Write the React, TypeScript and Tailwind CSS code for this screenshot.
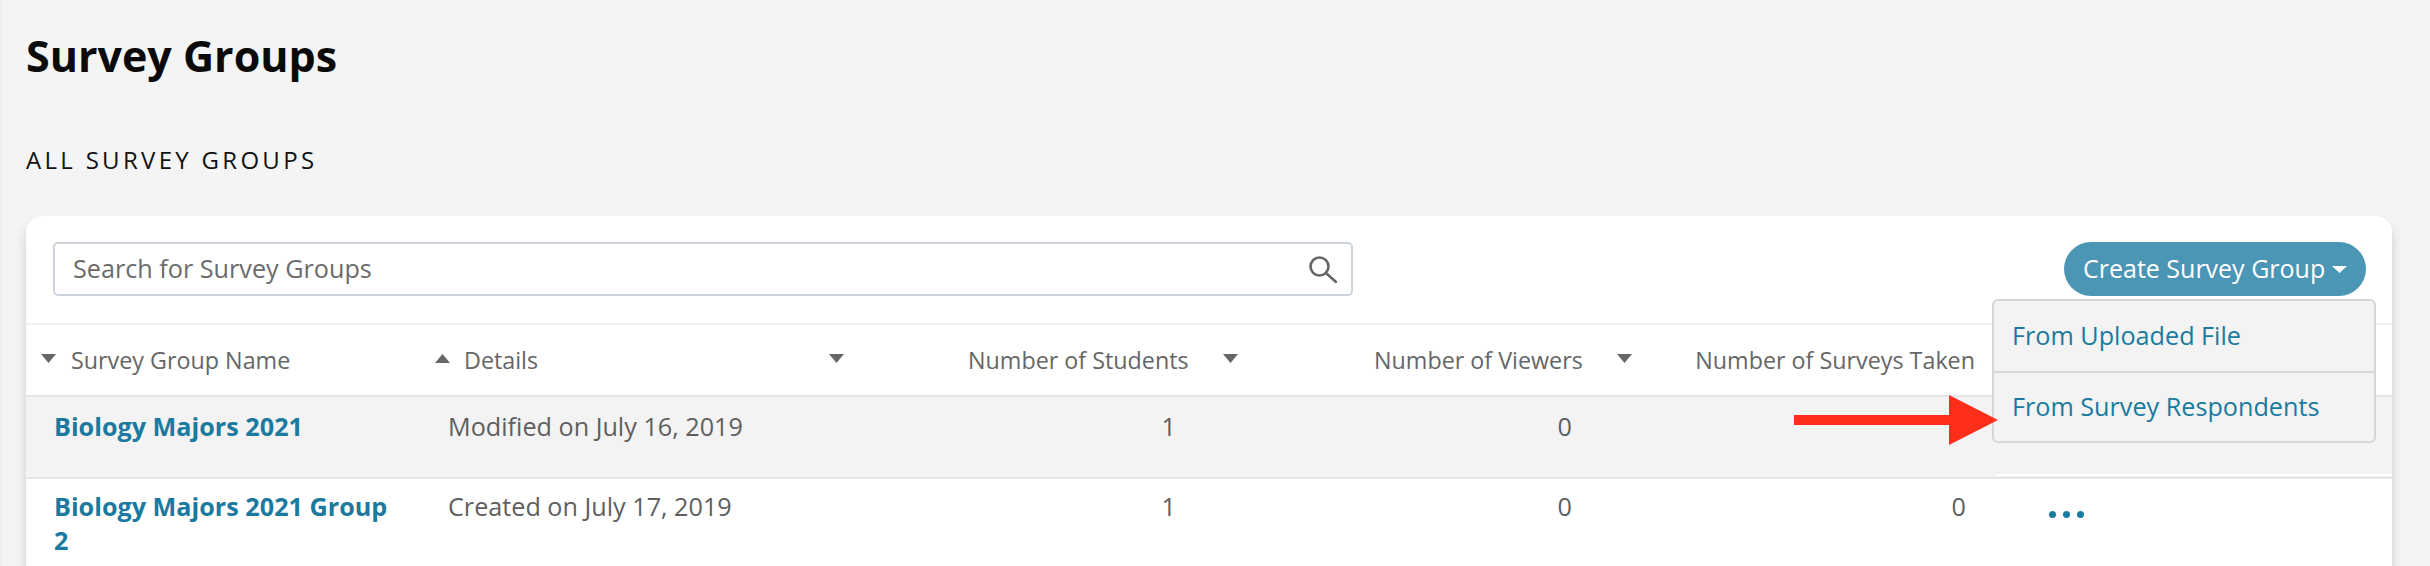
import React from 'react';

const fontStyle = "font-['Open_Sans',sans-serif]";

const SortDown = () => (
  <svg width="15" height="9" viewBox="0 0 15 9" className="mb-[4px] shrink-0">
    <path d="M0 0H15L7.5 9Z" fill="#666" />
  </svg>
);

const SortUp = () => (
  <svg width="15" height="9" viewBox="0 0 15 9" className="mb-[4px] shrink-0">
    <path d="M0 9H15L7.5 0Z" fill="#666" />
  </svg>
);

const Row: React.FC<{ name: React.ReactNode; details: string; students: string; viewers: string; taken?: string; grey?: boolean; menu?: boolean }> = ({
  name,
  details,
  students,
  viewers,
  taken,
  grey,
  menu,
}) => (
  <div className={`flex items-start border-t-2 border-[#e2e5e9] text-[25.2px] leading-[34px] text-[#5f5f5f] ${grey ? 'h-[82px] bg-[#f3f3f3] pt-[12px]' : 'bg-white pt-[10px]'}`}>
    <a href="#" className="ml-[28px] w-[394px] font-bold text-[#1b7a9e]">
      <span className="block w-[345px]">{name}</span>
    </a>
    <div className="w-[397px]">{details}</div>
    <div className="w-[331px] text-right">{students}</div>
    <div className="w-[396px] text-right">{viewers}</div>
    <div className="w-[394px] text-right">{taken}</div>
    {menu && (
      <div className="ml-[83px] mt-[22px] flex gap-[7px]">
        <span className="h-[7px] w-[7px] rounded-full bg-[#1b7a9e]" />
        <span className="h-[7px] w-[7px] rounded-full bg-[#1b7a9e]" />
        <span className="h-[7px] w-[7px] rounded-full bg-[#1b7a9e]" />
      </div>
    )}
  </div>
);

export default function App() {
  return (
    <div className={`h-[566px] overflow-hidden border-l-2 border-[#efefef] bg-[#f4f4f4] pl-[24px] pr-[38px] ${fontStyle}`}>
      <h1 className="pt-[27px] text-[43px] font-bold leading-[58px] text-[#0a0a0a]">Survey Groups</h1>
      <h2 className="mt-[60px] text-[24px] leading-[30px] tracking-[3.3px] text-[#111]">ALL SURVEY GROUPS</h2>
      <div className="relative mt-[41px] h-[400px] rounded-t-[16px] bg-white shadow-[0_8px_12px_rgba(0,0,0,0.16)]">
        {/* toolbar */}
        <div className="flex h-[109px] items-start justify-between border-b-2 border-[#f0f0f0] pl-[27px] pr-[26px] pt-[26px]">
          <div className="flex h-[54px] w-[1300px] items-center justify-between rounded-[5px] border-2 border-[#cdd3da] pl-[18px] pr-[14px]">
            <span className="text-[25.2px] text-[#6b6b6b]">Search for Survey Groups</span>
            <svg width="28" height="27" viewBox="0 0 28 27" fill="none" stroke="#666" strokeWidth="2.6">
              <circle cx="10.5" cy="10.5" r="9" />
              <path d="M17 17L27 26" strokeLinecap="round" />
            </svg>
          </div>
          <button className="flex h-[54px] w-[302px] items-center rounded-full bg-[#4b95b5] pl-[19px] text-[25px] text-white">
            Create Survey Group
            <svg width="15" height="7" viewBox="0 0 15 7" className="ml-[7px]">
              <path d="M0 0H15L7.5 7Z" fill="#fff" />
            </svg>
          </button>
        </div>

        {/* header row */}
        <div className="flex h-[70px] items-center text-[23.3px] text-[#666]">
          <div className="ml-[15px] flex w-[394px] items-center gap-[15px]">
            <SortDown />
            <span>Survey Group Name</span>
          </div>
          <div className="flex w-[394px] items-center gap-[14px]">
            <SortUp />
            <span>Details</span>
          </div>
          <SortDown />
          <div className="ml-[124px] w-[220px] whitespace-nowrap text-right">Number of Students</div>
          <div className="ml-[35px] flex items-center"><SortDown /></div>
          <div className="ml-[136px] w-[208px] whitespace-nowrap text-right">Number of Viewers</div>
          <div className="ml-[35px] flex items-center"><SortDown /></div>
          <div className="ml-[63px] w-[280px] whitespace-nowrap text-right">Number of Surveys Taken</div>
        </div>

        <Row name="Biology Majors 2021" details="Modified on July 16, 2019" students="1" viewers="0" grey />
        <Row name="Biology Majors 2021 Group 2" details="Created on July 17, 2019" students="1" viewers="0" taken="0" menu />

        {/* dropdown */}
        <div className="absolute left-[1966px] top-[83px] w-[384px] rounded-[6px] border-2 border-[#d6d6d6] bg-[#f3f3f3] text-[25.2px] text-[#1b7a9e]">
          <div className="flex h-[72px] items-center border-b-2 border-[#d6d6d6] pl-[18px]">From Uploaded File</div>
          <div className="flex h-[68px] items-center pl-[18px]">From Survey Respondents</div>
        </div>
        <div className="absolute left-[1970px] right-0 top-[258px] h-[2px] bg-white" />

        {/* annotation arrow */}
        <svg width="204" height="50" viewBox="0 0 204 50" className="absolute left-[1768px] top-[179px]">
          <path d="M0 20H155V0L204 25L155 50V30H0Z" fill="#ff2d1c" />
        </svg>
      </div>
    </div>
  );
}
